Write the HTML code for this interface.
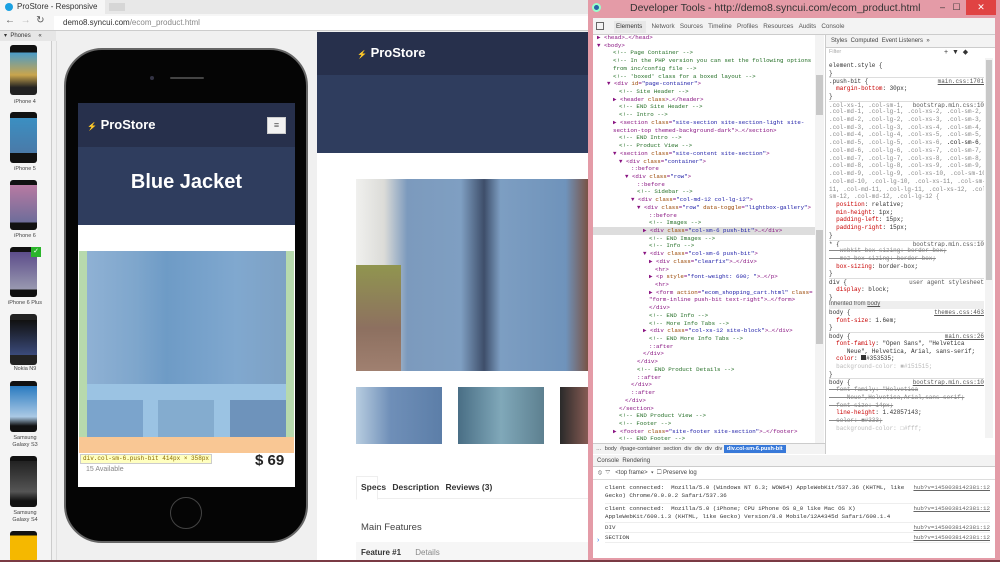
<!DOCTYPE html>
<html><head><meta charset="utf-8"><style>
*{margin:0;padding:0;box-sizing:border-box}
body{width:1000px;height:562px;overflow:hidden;background:#f0f0f0;font-family:"Liberation Sans",sans-serif;position:relative}
.a{position:absolute}
.mono{font-family:"Liberation Mono",monospace}
.el div{height:7.72px;line-height:7.72px;font-size:5.8px;white-space:nowrap;font-family:"Liberation Mono",monospace;color:#881280}
.c{color:#236e25!important}
.at{color:#994500}.v{color:#1a1aa6}
.ps{color:#881280}
.st div{height:7.72px;line-height:7.72px;font-size:5.95px;white-space:nowrap;font-family:"Liberation Mono",monospace;color:#333;overflow:hidden}
.pr{color:#c80000}
.lk{position:absolute;right:0;color:#555;text-decoration:underline;background:#fff}
.ph{position:absolute;left:10px;width:27px;border-radius:3px;background:#111}
.pl{position:absolute;left:0;width:50px;text-align:center;font-size:5.5px;color:#444;line-height:7px}
</style></head><body>
<div class="a" style="left:0;top:0;width:590px;height:14px;background:#e8e8e8"></div>
<div class="a" style="left:0;top:0;width:105px;height:14px;background:#f6f6f6;font-size:8px;line-height:14px;padding-left:17px;color:#333">ProStore - Responsive <span style="margin-left:4px">✕</span></div>
<div class="a" style="left:5px;top:3px;width:8px;height:8px;border-radius:50%;background:#1ba1e2"></div>
<div class="a" style="left:109px;top:3px;width:16px;height:8px;background:#d6d6d6"></div>
<div class="a" style="left:0;top:14px;width:590px;height:17px;background:#f6f6f6;border-bottom:1px solid #ccc"></div>
<div class="a" style="left:5px;top:15px;font-size:10px;color:#555">←&nbsp; <span style="color:#bbb">→</span>&nbsp; ↻</div>
<div class="a" style="left:54px;top:16px;width:536px;height:14px;background:#fff;font-size:8px;line-height:14px;padding-left:9px;color:#333">demo8.syncui.com<span style="color:#888">/ecom_product.html</span></div>
<div class="a" style="left:0;top:31px;width:52px;height:531px;background:#f4f4f4;border-right:1px solid #ccc"></div>
<div class="a" style="left:0;top:31px;width:56px;height:10px;background:#e6e6e6;font-size:6px;line-height:10px;padding-left:4px;color:#333">▾ &nbsp;Phones <span style="margin-left:6px">«</span></div>
<div class="a" style="left:56px;top:41px;width:1px;height:520px;background:#ddd"></div>
<div class="ph" style="top:45px;height:50px;background:linear-gradient(#111 15%,#4a9bc9 15%,#c9a54d 60%,#222 85%)"></div><div class="pl" style="top:99px">iPhone 4</div>
<div class="ph" style="top:112px;height:51px;background:linear-gradient(#111 12%,#3b8fc2 12%,#4a7aa8 80%,#111 80%)"></div><div class="pl" style="top:166px">iPhone 5</div>
<div class="ph" style="top:180px;height:50px;background:linear-gradient(#111 10%,#b87aa2 10%,#6d6d9a 85%,#111 85%)"></div><div class="pl" style="top:233px">iPhone 6</div>
<div class="ph" style="top:247px;height:50px;background:linear-gradient(#111 10%,#5c4d8a 10%,#9999b0 85%,#111 85%)"></div><div class="pl" style="top:300px">iPhone 6 Plus</div>
<div class="a" style="left:31px;top:247px;width:10px;height:10px;background:#2bb52b;color:#fff;font-size:7px;text-align:center;line-height:10px">✓</div>
<div class="ph" style="top:314px;height:51px;background:linear-gradient(#222 12%,#111 12%,#3a4a7a 80%,#222 80%)"></div><div class="pl" style="top:366px">Nokia N9</div>
<div class="ph" style="top:381px;height:51px;background:linear-gradient(#111 10%,#2a7bc0 10%,#aac9e5 70%,#111 88%)"></div><div class="pl" style="top:435px">Samsung<br>Galaxy S3</div>
<div class="ph" style="top:456px;height:51px;background:linear-gradient(#111 10%,#222 10%,#555 70%,#111 88%)"></div><div class="pl" style="top:510px">Samsung<br>Galaxy S4</div>
<div class="ph" style="top:531px;height:31px;background:linear-gradient(#111 15%,#f5b800 15%)"></div>
<div class="a" style="left:64px;top:48px;width:244px;height:495px;border-radius:38px;background:#050505;border:2px solid #666"></div>
<div class="a" style="left:150px;top:76px;width:4px;height:4px;border-radius:50%;background:#334"></div>
<div class="a" style="left:170px;top:77px;width:34px;height:2px;border-radius:1px;background:#444"></div>
<div class="a" style="left:170px;top:497px;width:32px;height:32px;border-radius:50%;border:1px solid #444"></div>
<div class="a" style="left:78px;top:103px;width:217px;height:44px;background:#27304c"></div>
<div class="a" style="left:87px;top:117px;color:#fff;font-weight:bold;font-size:13px"><span style="font-size:8px;color:#aaa">⚡</span> ProStore</div>
<div class="a" style="left:267px;top:117px;width:19px;height:17px;background:#f2f2f2;border:1px solid #ccc;text-align:center;font-size:9px;line-height:15px;color:#555">≡</div>
<div class="a" style="left:78px;top:147px;width:217px;height:78px;background:#2f3d5e"></div>
<div class="a" style="left:78px;top:171px;width:217px;text-align:center;color:#fff;font-weight:bold;font-size:20px">Blue Jacket</div>
<div class="a" style="left:78px;top:225px;width:217px;height:262px;background:#fff"></div>
<div class="a" style="left:79px;top:251px;width:215px;height:186px;background:#b7d9ad"></div>
<div class="a" style="left:87px;top:251px;width:199px;height:186px;background:#9bc3e3"></div>
<div class="a" style="left:87px;top:251px;width:199px;height:133px;background:linear-gradient(90deg,#8fb1d4 0%,#7ea6cc 25%,#6e9bc6 40%,#80a8cf 75%,#7ea1c4 100%)"></div>
<div class="a" style="left:87px;top:400px;width:56px;height:37px;background:#7ba4cc"></div>
<div class="a" style="left:158px;top:400px;width:56px;height:37px;background:#84accf"></div>
<div class="a" style="left:230px;top:400px;width:56px;height:37px;background:#6e93bb"></div>
<div class="a" style="left:79px;top:437px;width:215px;height:16px;background:#f9c794"></div>
<div class="a mono" style="left:80px;top:454px;height:10px;background:#ffffc0;border:1px solid #ccc;font-size:6px;line-height:8px;padding:0 2px;color:#8a6a00">div.col-sm-6.push-bit 414px × 358px</div>
<div class="a" style="left:255px;top:452px;font-weight:bold;font-size:15px;color:#222">$ 69</div>
<div class="a" style="left:86px;top:466px;font-size:7px;color:#888">15 Available</div>
<div class="a" style="left:317px;top:32px;width:272px;height:530px;background:#fff"></div>
<div class="a" style="left:317px;top:32px;width:272px;height:43px;background:#27304c"></div>
<div class="a" style="left:357px;top:45px;color:#fff;font-weight:bold;font-size:13px"><span style="font-size:8px;color:#aaa">⚡</span> ProStore</div>
<div class="a" style="left:317px;top:75px;width:272px;height:78px;background:#2f3d5e"></div>
<div class="a" style="left:356px;top:179px;width:233px;height:192px;background:linear-gradient(90deg,#f0f0ee 0%,#dcdcd8 12%,#7c9abd 22%,#7f9fc2 45%,#3e4e6a 55%,#7d9ec2 62%,#6f93bb 90%,#7a5040 100%)"></div>
<div class="a" style="left:356px;top:265px;width:45px;height:106px;background:linear-gradient(#90954f,#8d7060 60%,#a08070)"></div>
<div class="a" style="left:356px;top:387px;width:86px;height:57px;background:linear-gradient(90deg,#b8cde0,#6f8fb8 40%,#5c7ea8)"></div>
<div class="a" style="left:458px;top:387px;width:86px;height:57px;background:linear-gradient(90deg,#496e85,#80a8b9 50%,#5d8090)"></div>
<div class="a" style="left:560px;top:387px;width:29px;height:57px;background:linear-gradient(90deg,#2a2a2a,#8a5d55)"></div>
<div class="a" style="left:356px;top:476px;width:233px;height:23px;border-bottom:1px solid #eee"></div>
<div class="a" style="left:356px;top:476px;width:22px;height:24px;border:1px solid #eee;border-bottom:1px solid #fff;background:#fff"></div>
<div class="a" style="left:361px;top:482px;font-size:8.5px;font-weight:bold;color:#333">Specs <span style="margin-left:4px">Description</span> <span style="margin-left:4px">Reviews (3)</span></div>
<div class="a" style="left:361px;top:522px;font-size:9.5px;color:#444">Main Features</div>
<div class="a" style="left:356px;top:542px;width:233px;height:20px;background:#f6f6f6"></div>
<div class="a" style="left:361px;top:548px;font-size:8px;color:#333"><b>Feature #1</b> <span style="margin-left:12px;color:#888">Details</span></div>
<div class="a" style="left:588px;top:0;width:412px;height:562px;background:#e49ba7"></div>
<div class="a" style="left:592px;top:3px;width:9px;height:9px;border-radius:50%;background:#2a62a8;border:2px solid #9fc"></div>
<div class="a" style="left:630px;top:2px;font-size:10.5px;color:#333">Developer Tools - http://demo8.syncui.com/ecom_product.html</div>
<div class="a" style="left:940px;top:2px;font-size:9px;color:#333">–&nbsp;&nbsp;&nbsp;☐</div>
<div class="a" style="left:966px;top:0;width:30px;height:15px;background:#e04343;color:#fff;text-align:center;font-size:9px;line-height:15px">✕</div>
<div class="a" style="left:593px;top:18px;width:402px;height:540px;background:#fff"></div>
<div class="a" style="left:593px;top:18px;width:402px;height:17px;background:#f3f3f3;border-bottom:1px solid #ccc;font-size:6.3px;line-height:17px;color:#555;padding-left:27px;white-space:nowrap">Elements &nbsp;&nbsp;Network &nbsp;&nbsp;Sources &nbsp;&nbsp;Timeline &nbsp;&nbsp;Profiles &nbsp;&nbsp;Resources &nbsp;&nbsp;Audits &nbsp;&nbsp;Console</div>
<div class="a" style="left:596px;top:22px;width:8px;height:8px;border:1px solid #666"></div>
<div class="a" style="left:614px;top:21px;width:32px;height:12px;background:#e8e8e8"></div>
<div class="a" style="left:616px;top:18px;font-size:6.3px;line-height:17px;color:#333">Elements</div>
<div class="a" style="left:593px;top:227px;width:222px;height:7.7px;background:#ddd"></div>
<div class="a el" style="left:597px;top:34px;width:218px;overflow:hidden">
<div>▶ &lt;head&gt;…&lt;/head&gt;</div>
<div>▼ &lt;body&gt;</div>
<div class="c" style="padding-left:16px">&lt;!-- Page Container --&gt;</div>
<div class="c" style="padding-left:16px">&lt;!-- In the PHP version you can set the following options</div>
<div class="c" style="padding-left:16px">from inc/config file --&gt;</div>
<div class="c" style="padding-left:16px">&lt;!-- 'boxed' class for a boxed layout --&gt;</div>
<div style="padding-left:10px">▼ &lt;div <span class="at">id</span>=<span class="v">"page-container"</span>&gt;</div>
<div class="c" style="padding-left:22px">&lt;!-- Site Header --&gt;</div>
<div style="padding-left:16px">▶ &lt;header <span class="at">class</span>&gt;…&lt;/header&gt;</div>
<div class="c" style="padding-left:22px">&lt;!-- END Site Header --&gt;</div>
<div class="c" style="padding-left:22px">&lt;!-- Intro --&gt;</div>
<div style="padding-left:16px">▶ &lt;section <span class="at">class</span>=<span class="v">"site-section site-section-light site-</span></div>
<div class="v" style="padding-left:16px">section-top themed-background-dark"<span class="ps">&gt;…&lt;/section&gt;</span></div>
<div class="c" style="padding-left:22px">&lt;!-- END Intro --&gt;</div>
<div class="c" style="padding-left:22px">&lt;!-- Product View --&gt;</div>
<div style="padding-left:16px">▼ &lt;section <span class="at">class</span>=<span class="v">"site-content site-section"</span>&gt;</div>
<div style="padding-left:22px">▼ &lt;div <span class="at">class</span>=<span class="v">"container"</span>&gt;</div>
<div style="padding-left:34px">::before</div>
<div style="padding-left:28px">▼ &lt;div <span class="at">class</span>=<span class="v">"row"</span>&gt;</div>
<div style="padding-left:40px">::before</div>
<div class="c" style="padding-left:40px">&lt;!-- Sidebar --&gt;</div>
<div style="padding-left:34px">▼ &lt;div <span class="at">class</span>=<span class="v">"col-md-12 col-lg-12"</span>&gt;</div>
<div style="padding-left:40px">▼ &lt;div <span class="at">class</span>=<span class="v">"row"</span> <span class="at">data-toggle</span>=<span class="v">"lightbox-gallery"</span>&gt;</div>
<div style="padding-left:52px">::before</div>
<div class="c" style="padding-left:52px">&lt;!-- Images --&gt;</div>
<div style="padding-left:46px">▶ &lt;div <span class="at">class</span>=<span class="v">"col-sm-6 push-bit"</span>&gt;…&lt;/div&gt;</div>
<div class="c" style="padding-left:52px">&lt;!-- END Images --&gt;</div>
<div class="c" style="padding-left:52px">&lt;!-- Info --&gt;</div>
<div style="padding-left:46px">▼ &lt;div <span class="at">class</span>=<span class="v">"col-sm-6 push-bit"</span>&gt;</div>
<div style="padding-left:52px">▶ &lt;div <span class="at">class</span>=<span class="v">"clearfix"</span>&gt;…&lt;/div&gt;</div>
<div style="padding-left:58px">&lt;hr&gt;</div>
<div style="padding-left:52px">▶ &lt;p <span class="at">style</span>=<span class="v">"font-weight: 600; "</span>&gt;…&lt;/p&gt;</div>
<div style="padding-left:58px">&lt;hr&gt;</div>
<div style="padding-left:52px">▶ &lt;form <span class="at">action</span>=<span class="v">"ecom_shopping_cart.html"</span> <span class="at">class</span>=</div>
<div class="v" style="padding-left:52px">"form-inline push-bit text-right"<span class="ps">&gt;…&lt;/form&gt;</span></div>
<div style="padding-left:52px">&lt;/div&gt;</div>
<div class="c" style="padding-left:52px">&lt;!-- END Info --&gt;</div>
<div class="c" style="padding-left:52px">&lt;!-- More Info Tabs --&gt;</div>
<div style="padding-left:46px">▶ &lt;div <span class="at">class</span>=<span class="v">"col-xs-12 site-block"</span>&gt;…&lt;/div&gt;</div>
<div class="c" style="padding-left:52px">&lt;!-- END More Info Tabs --&gt;</div>
<div style="padding-left:52px">::after</div>
<div style="padding-left:46px">&lt;/div&gt;</div>
<div style="padding-left:40px">&lt;/div&gt;</div>
<div class="c" style="padding-left:40px">&lt;!-- END Product Details --&gt;</div>
<div style="padding-left:40px">::after</div>
<div style="padding-left:34px">&lt;/div&gt;</div>
<div style="padding-left:34px">::after</div>
<div style="padding-left:28px">&lt;/div&gt;</div>
<div style="padding-left:22px">&lt;/section&gt;</div>
<div class="c" style="padding-left:22px">&lt;!-- END Product View --&gt;</div>
<div class="c" style="padding-left:22px">&lt;!-- Footer --&gt;</div>
<div style="padding-left:16px">▶ &lt;footer <span class="at">class</span>=<span class="v">"site-footer site-section"</span>&gt;…&lt;/footer&gt;</div>
<div class="c" style="padding-left:22px">&lt;!-- END Footer --&gt;</div>
</div>
<div class="a" style="left:815px;top:35px;width:9px;height:408px;background:#f3f3f3"></div>
<div class="a" style="left:816px;top:75px;width:7px;height:40px;background:#c8c8c8"></div>
<div class="a" style="left:816px;top:230px;width:7px;height:114px;background:#c8c8c8"></div>
<div class="a" style="left:593px;top:443px;width:232px;height:11px;background:#f3f3f3;border-top:1px solid #ccc;font-size:5.6px;line-height:10px;color:#444;white-space:nowrap;padding-left:3px">… &nbsp;body &nbsp;#page-container &nbsp;section &nbsp;div &nbsp;div &nbsp;div &nbsp;div <span style="background:#3879d9;color:#fff;padding:1px 3px;font-weight:bold">div.col-sm-6.push-bit</span></div>
<div class="a" style="left:825px;top:35px;width:1px;height:420px;background:#ccc"></div>
<div class="a" style="left:826px;top:35px;width:169px;height:13px;background:#f3f3f3;border-bottom:1px solid #ccc;font-size:6px;line-height:13px;color:#444;padding-left:5px;white-space:nowrap">Styles &nbsp;Computed &nbsp;Event Listeners &nbsp;»</div>
<div class="a" style="left:826px;top:49px;font-size:5.5px;color:#aaa;padding-left:3px">Filter</div>
<div class="a" style="left:944px;top:48px;font-size:7px;color:#333">+ &nbsp;▼ &nbsp;◆</div>
<div class="a" style="left:985px;top:58px;width:8px;height:380px;background:#f3f3f3"></div>
<div class="a" style="left:986px;top:60px;width:6px;height:220px;background:#c8c8c8"></div>
<div class="a st" style="left:829px;top:62px;width:155px;height:380px;overflow:hidden">
<div>element.style {</div><div>}</div>
<div style="border-top:1px solid #ddd;position:relative">.push-bit { <span class="lk">main.css:1701</span></div>
<div>&nbsp;&nbsp;<span class="pr">margin-bottom</span>: 30px;</div><div>}</div>
<div style="border-top:1px solid #ddd;color:#888;position:relative">.col-xs-1, .col-sm-1, <span class="lk">bootstrap.min.css:10</span></div>
<div style="color:#888">.col-md-1, .col-lg-1, .col-xs-2, .col-sm-2,</div>
<div style="color:#888">.col-md-2, .col-lg-2, .col-xs-3, .col-sm-3,</div>
<div style="color:#888">.col-md-3, .col-lg-3, .col-xs-4, .col-sm-4,</div>
<div style="color:#888">.col-md-4, .col-lg-4, .col-xs-5, .col-sm-5,</div>
<div style="color:#888">.col-md-5, .col-lg-5, .col-xs-6, <span style="color:#222">.col-sm-6</span>,</div>
<div style="color:#888">.col-md-6, .col-lg-6, .col-xs-7, .col-sm-7,</div>
<div style="color:#888">.col-md-7, .col-lg-7, .col-xs-8, .col-sm-8,</div>
<div style="color:#888">.col-md-8, .col-lg-8, .col-xs-9, .col-sm-9,</div>
<div style="color:#888">.col-md-9, .col-lg-9, .col-xs-10, .col-sm-10,</div>
<div style="color:#888">.col-md-10, .col-lg-10, .col-xs-11, .col-sm-</div>
<div style="color:#888">11, .col-md-11, .col-lg-11, .col-xs-12, .col-</div>
<div style="color:#888">sm-12, .col-md-12, .col-lg-12 {</div>
<div>&nbsp;&nbsp;<span class="pr">position</span>: relative;</div>
<div>&nbsp;&nbsp;<span class="pr">min-height</span>: 1px;</div>
<div>&nbsp;&nbsp;<span class="pr">padding-left</span>: 15px;</div>
<div>&nbsp;&nbsp;<span class="pr">padding-right</span>: 15px;</div>
<div>}</div>
<div style="border-top:1px solid #ddd;position:relative">* { <span class="lk">bootstrap.min.css:10</span></div>
<div style="text-decoration:line-through;color:#888">&nbsp;&nbsp;-webkit-box-sizing: border-box;</div>
<div style="text-decoration:line-through;color:#888">&nbsp;&nbsp;-moz-box-sizing: border-box;</div>
<div>&nbsp;&nbsp;<span class="pr">box-sizing</span>: border-box;</div>
<div>}</div>
<div style="border-top:1px solid #ddd;position:relative">div { <span class="lk" style="text-decoration:none">user agent stylesheet</span></div>
<div>&nbsp;&nbsp;<span class="pr">display</span>: block;</div>
<div>}</div>
<div style="background:#eee;font-family:'Liberation Sans',sans-serif;color:#555">Inherited from <u>body</u></div>
<div style="position:relative">body { <span class="lk">themes.css:463</span></div>
<div>&nbsp;&nbsp;<span class="pr">font-size</span>: 1.6em;</div>
<div>}</div>
<div style="border-top:1px solid #ddd;position:relative">body { <span class="lk">main.css:26</span></div>
<div>&nbsp;&nbsp;<span class="pr">font-family</span>: "Open Sans", "Helvetica</div>
<div>&nbsp;&nbsp;&nbsp;&nbsp;&nbsp;Neue", Helvetica, Arial, sans-serif;</div>
<div>&nbsp;&nbsp;<span class="pr">color</span>: <span style="display:inline-block;width:5px;height:5px;background:#353535"></span>#353535;</div>
<div style="color:#bbb">&nbsp;&nbsp;background-color: ■#151515;</div>
<div>}</div>
<div style="border-top:1px solid #ddd;position:relative">body { <span class="lk">bootstrap.min.css:10</span></div>
<div style="text-decoration:line-through;color:#888">&nbsp;&nbsp;font-family: "Helvetica</div>
<div style="text-decoration:line-through;color:#888">&nbsp;&nbsp;&nbsp;&nbsp;&nbsp;Neue",Helvetica,Arial,sans-serif;</div>
<div style="text-decoration:line-through;color:#888">&nbsp;&nbsp;font-size: 14px;</div>
<div>&nbsp;&nbsp;<span class="pr">line-height</span>: 1.42857143;</div>
<div style="text-decoration:line-through;color:#888">&nbsp;&nbsp;color: ■#333;</div>
<div style="color:#bbb">&nbsp;&nbsp;background-color: □#fff;</div>
</div>
<div class="a" style="left:593px;top:454px;width:402px;height:104px;background:#fff"></div>
<div class="a" style="left:593px;top:455px;width:402px;height:12px;background:#f3f3f3;border-bottom:1px solid #ccc;font-size:6px;line-height:12px;color:#444;padding-left:4px">Console &nbsp;Rendering</div>
<div class="a" style="left:593px;top:467px;width:402px;height:13px;border-bottom:1px solid #ddd;font-size:6px;line-height:13px;color:#444;padding-left:5px;white-space:nowrap">⦸ &nbsp;▽ &nbsp;&nbsp;&lt;top frame&gt; &nbsp;▾ &nbsp;☐ Preserve log</div>
<div class="a mono" style="left:605px;top:484px;width:385px;font-size:5.8px;line-height:8px;color:#333">
<div style="border-bottom:1px solid #eee;height:20px">client connected: &nbsp;Mozilla/5.0 (Windows NT 6.3; WOW64) AppleWebKit/537.36 (KHTML, like<span style="float:right;color:#666;text-decoration:underline">hub?v=1450038142381:12</span><br>Gecko) Chrome/0.0.0.2 Safari/537.36</div>
<div style="border-bottom:1px solid #eee;height:19px;padding-top:1px">client connected: &nbsp;Mozilla/5.0 (iPhone; CPU iPhone OS 8_0 like Mac OS X)<span style="float:right;color:#666;text-decoration:underline">hub?v=1450038142381:12</span><br>AppleWebKit/600.1.3 (KHTML, like Gecko) Version/8.0 Mobile/12A4345d Safari/600.1.4</div>
<div style="border-bottom:1px solid #eee;height:10px;padding-top:1px">DIV<span style="float:right;color:#666;text-decoration:underline">hub?v=1450038142381:12</span></div>
<div style="border-bottom:1px solid #eee;height:10px;padding-top:1px">SECTION<span style="float:right;color:#666;text-decoration:underline">hub?v=1450038142381:12</span></div>
</div>
<div class="a" style="left:597px;top:537px;font-size:7px;color:#367cf1">›</div>
<div class="a" style="left:0;top:560px;width:1000px;height:2px;background:#7a3a44"></div>
</body></html>
